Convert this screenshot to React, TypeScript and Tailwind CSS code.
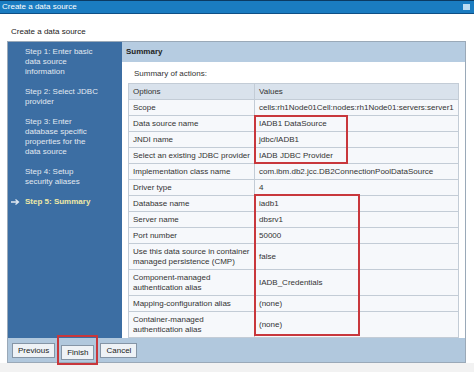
import React from 'react';

const rows: { k: React.ReactNode; v: string; tall?: boolean }[] = [
  { k: 'Scope', v: 'cells:rh1Node01Cell:nodes:rh1Node01:servers:server1' },
  { k: 'Data source name', v: 'IADB1 DataSource' },
  { k: 'JNDI name', v: 'jdbc/IADB1' },
  { k: 'Select an existing JDBC provider', v: 'IADB JDBC Provider' },
  { k: 'Implementation class name', v: 'com.ibm.db2.jcc.DB2ConnectionPoolDataSource' },
  { k: 'Driver type', v: '4' },
  { k: 'Database name', v: 'iadb1' },
  { k: 'Server name', v: 'dbsrv1' },
  { k: 'Port number', v: '50000' },
  { k: <>Use this data source in container<br />managed persistence (CMP)</>, v: 'false', tall: true },
  { k: <>Component-managed<br />authentication alias</>, v: 'IADB_Credentials', tall: true },
  { k: 'Mapping-configuration alias', v: '(none)' },
  { k: <>Container-managed<br />authentication alias</>, v: '(none)', tall: true },
];

const steps: React.ReactNode[] = [
  <>Step 1: Enter basic<br />data source<br />information</>,
  <>Step 2: Select JDBC<br />provider</>,
  <>Step 3: Enter<br />database specific<br />properties for the<br />data source</>,
  <>Step 4: Setup<br />security aliases</>,
];

function Btn({ label }: { label: string }) {
  return (
    <button className="h-[15px] px-[5px] border border-[#8595a6] bg-[#eef2f6] text-[8px] leading-[13px] text-[#222]">
      {label}
    </button>
  );
}

export default function App() {
  return (
    <div className="w-[474px] h-[372px] bg-white overflow-hidden" style={{ fontFamily: '"Liberation Sans", Arial, sans-serif' }}>
      {/* Title bar */}
      <div className="h-[1px] bg-[#0b3a63]" />
      <div className="h-[12px] bg-[#1a7cc1] flex items-center justify-between pl-[2px] pr-[4px]">
        <span className="text-[8px] leading-[12px] text-white">Create a data source</span>
        <span className="w-[7px] h-[6px] bg-[#bcdcf2]" />
      </div>
      <div className="h-[1px] bg-[#0e4f85]" />

      <p className="mt-[12px] ml-[11px] text-[8px] leading-[12px] text-[#222]">Create a data source</p>

      {/* Wizard panel */}
      <div className="mt-[3px] ml-[7px] w-[459px] border border-[#9aa9b8]">
        <div className="flex">
          {/* Steps */}
          <div className="w-[114px] bg-[#3c6ea3] pt-[5px] text-[8px] leading-[10px] text-[#e2e9f1]">
            {steps.map((s, i) => (
              <p key={i} className="pl-[17px] mb-[10px]">{s}</p>
            ))}
            <div className="flex items-center">
              <svg width="17" height="10" viewBox="0 0 17 10" className="shrink-0">
                <path d="M3 5h7M7.5 2.5L10.5 5L7.5 7.5" stroke="#e2e9f1" strokeWidth="1.3" fill="none" />
              </svg>
              <span className="font-bold text-[#efe9a6]">Step 5: Summary</span>
            </div>
          </div>

          {/* Content */}
          <div className="flex-1 bg-white">
            <div className="h-[20px] bg-[#b6cce1] flex items-center pl-[4px] text-[8px] font-bold text-[#1e1e1e]">Summary</div>
            <div className="pt-[6px] pl-[6px] pr-[6px]">
              <p className="pl-[6px] text-[8px] leading-[12px] text-[#333] mb-[3px]">Summary of actions:</p>
              <div className="relative border-l border-t border-[#c3ccd6] text-[8px] text-[#333]">
                <div className="grid grid-cols-[126px_1fr] bg-[#d9e2ec]">
                  <div className="h-[16px] flex items-center pl-[4px] border-r border-b border-[#c3ccd6]">Options</div>
                  <div className="h-[16px] flex items-center pl-[4px] border-r border-b border-[#c3ccd6]">Values</div>
                </div>
                {rows.map((r, i) => (
                  <div key={i} className="grid grid-cols-[126px_1fr] bg-[#f6f8fb]">
                    <div className={`${r.tall ? 'h-[26px]' : 'h-[16px]'} flex items-center pl-[4px] leading-[10px] border-r border-b border-[#c3ccd6]`}>{r.k}</div>
                    <div className={`${r.tall ? 'h-[26px]' : 'h-[16px]'} flex items-center pl-[4px] border-r border-b border-[#c3ccd6] whitespace-nowrap`}>{r.v}</div>
                  </div>
                ))}
                <div className="absolute left-[125px] top-[31px] w-[94px] h-[49px] border-2 border-[#c8373c]" />
                <div className="absolute left-[125px] top-[110px] w-[106px] h-[142px] border-2 border-[#c8373c]" />
              </div>
            </div>
          </div>
        </div>

        {/* Buttons */}
        <div className="h-[24px] bg-[#b1c8dd] flex items-center pl-[4px] gap-[2px]">
          <Btn label="Previous" />
          <div className="border-2 border-[#c8373c] px-[2px] py-[1px]">
            <Btn label="Finish" />
          </div>
          <Btn label="Cancel" />
        </div>
      </div>
      <div className="h-[10px] bg-[#f2f2f2]" />
    </div>
  );
}
